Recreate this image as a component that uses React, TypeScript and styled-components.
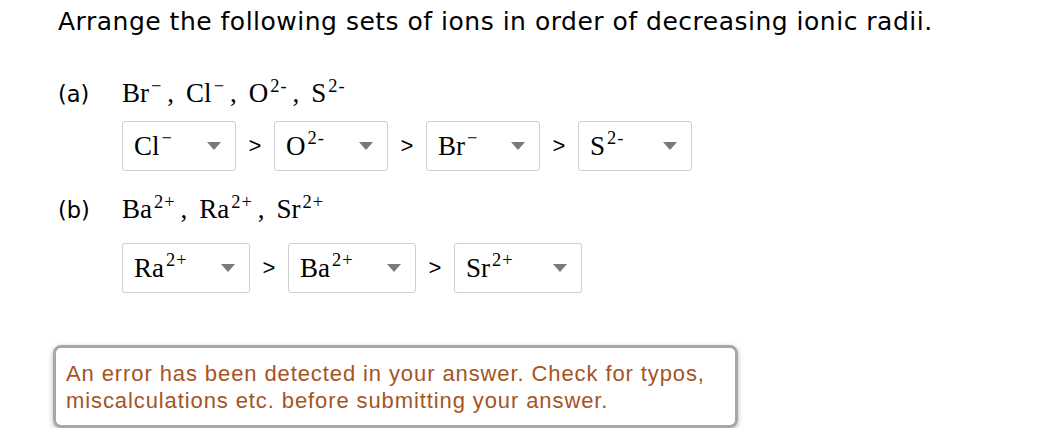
import React from 'react'
import styled, { createGlobalStyle } from 'styled-components'

const GlobalStyle = createGlobalStyle`
  body {
    margin: 0;
    background: #fff;
  }
`

const Page = styled.div`
  padding: 7px 0 0 58px;
  font-family: 'DejaVu Sans', Verdana, sans-serif;
  color: #000;
`

const Title = styled.div`
  font-size: 25px;
  letter-spacing: 0.5px;
  line-height: 30px;
  margin-bottom: 41px;
`

const Part = styled.div<{ $space: number }>`
  display: flex;
  flex-direction: column;
  margin-bottom: ${({ $space }) => $space}px;
`

const PartHeader = styled.div`
  display: flex;
  align-items: baseline;
  height: 32px;
`

const Label = styled.span`
  font-size: 22.5px;
  width: 64px;
`

const Ions = styled.span`
  font-family: 'Liberation Serif', 'Times New Roman', serif;
  font-size: 27px;
`

const Sup = styled.sup`
  font-size: 0.68em;
  line-height: 0;
  letter-spacing: 1px;
  vertical-align: 0.55em;
  margin-left: 2px;
`

const Sep = styled.span`
  margin: 0 12px 0 5px;
`

const SelectRow = styled.div<{ $top: number }>`
  display: flex;
  align-items: center;
  margin: ${({ $top }) => $top}px 0 0 64px;
  height: 50px;
`

const Select = styled.div<{ $w: number }>`
  box-sizing: border-box;
  width: ${({ $w }) => $w}px;
  height: 50px;
  border: 1px solid #cfcfcf;
  border-radius: 3px;
  display: flex;
  align-items: center;
  justify-content: space-between;
  padding: 0 14px 0 11px;
  background: #fff;
`

const Arrow = styled.span`
  width: 0;
  height: 0;
  border-left: 7px solid transparent;
  border-right: 7px solid transparent;
  border-top: 8px solid #7a7a7a;
`

const Gt = styled.span`
  width: 38px;
  text-align: center;
  font-family: 'Liberation Sans', Arial, sans-serif;
  font-size: 22px;
`

const ErrorBox = styled.div`
  box-sizing: border-box;
  width: 685px;
  margin: 52px 0 0 -5px;
  border: 3px solid #a6a7ab;
  border-radius: 8px;
  box-shadow: 0 2px 5px rgba(0, 0, 0, 0.3);
  padding: 12px 10px 11px 10px;
  font-family: 'Liberation Sans', Arial, sans-serif;
  font-size: 22px;
  letter-spacing: 0.9px;
  line-height: 27px;
  color: #a6541f;
`

type Ion = { sym: string; charge: string }

const Formula = ({ ion }: { ion: Ion }) => (
  <Ions>
    {ion.sym}
    <Sup>{ion.charge}</Sup>
  </Ions>
)

const partA: Ion[] = [
  { sym: 'Br', charge: '−' },
  { sym: 'Cl', charge: '−' },
  { sym: 'O', charge: '2-' },
  { sym: 'S', charge: '2-' }
]
const answerA: Ion[] = [partA[1], partA[2], partA[0], partA[3]]

const partB: Ion[] = [
  { sym: 'Ba', charge: '2+' },
  { sym: 'Ra', charge: '2+' },
  { sym: 'Sr', charge: '2+' }
]
const answerB: Ion[] = [partB[1], partB[0], partB[2]]

const Question = ({
  label,
  ions,
  answer,
  width,
  top,
  space
}: {
  label: string
  ions: Ion[]
  answer: Ion[]
  width: number
  top: number
  space: number
}) => (
  <Part $space={space}>
    <PartHeader>
      <Label>{label}</Label>
      {ions.map((ion, i) => (
        <React.Fragment key={ion.sym}>
          {i > 0 && (
            <Ions>
              <Sep>,</Sep>
            </Ions>
          )}
          <Formula ion={ion} />
        </React.Fragment>
      ))}
    </PartHeader>
    <SelectRow $top={top}>
      {answer.map((ion, i) => (
        <React.Fragment key={ion.sym}>
          {i > 0 && <Gt>&gt;</Gt>}
          <Select $w={width}>
            <Formula ion={ion} />
            <Arrow />
          </Select>
        </React.Fragment>
      ))}
    </SelectRow>
  </Part>
)

export default function App() {
  return (
    <>
      <GlobalStyle />
      <Page>
        <Title>
          Arrange the following sets of ions in order of decreasing ionic radii.
        </Title>
        <Question
          label='(a)'
          ions={partA}
          answer={answerA}
          width={114}
          top={11}
          space={23}
        />
        <Question
          label='(b)'
          ions={partB}
          answer={answerB}
          width={128}
          top={17}
          space={0}
        />
        <ErrorBox>
          An error has been detected in your answer. Check for typos,
          <br />
          miscalculations etc. before submitting your answer.
        </ErrorBox>
      </Page>
    </>
  )
}
